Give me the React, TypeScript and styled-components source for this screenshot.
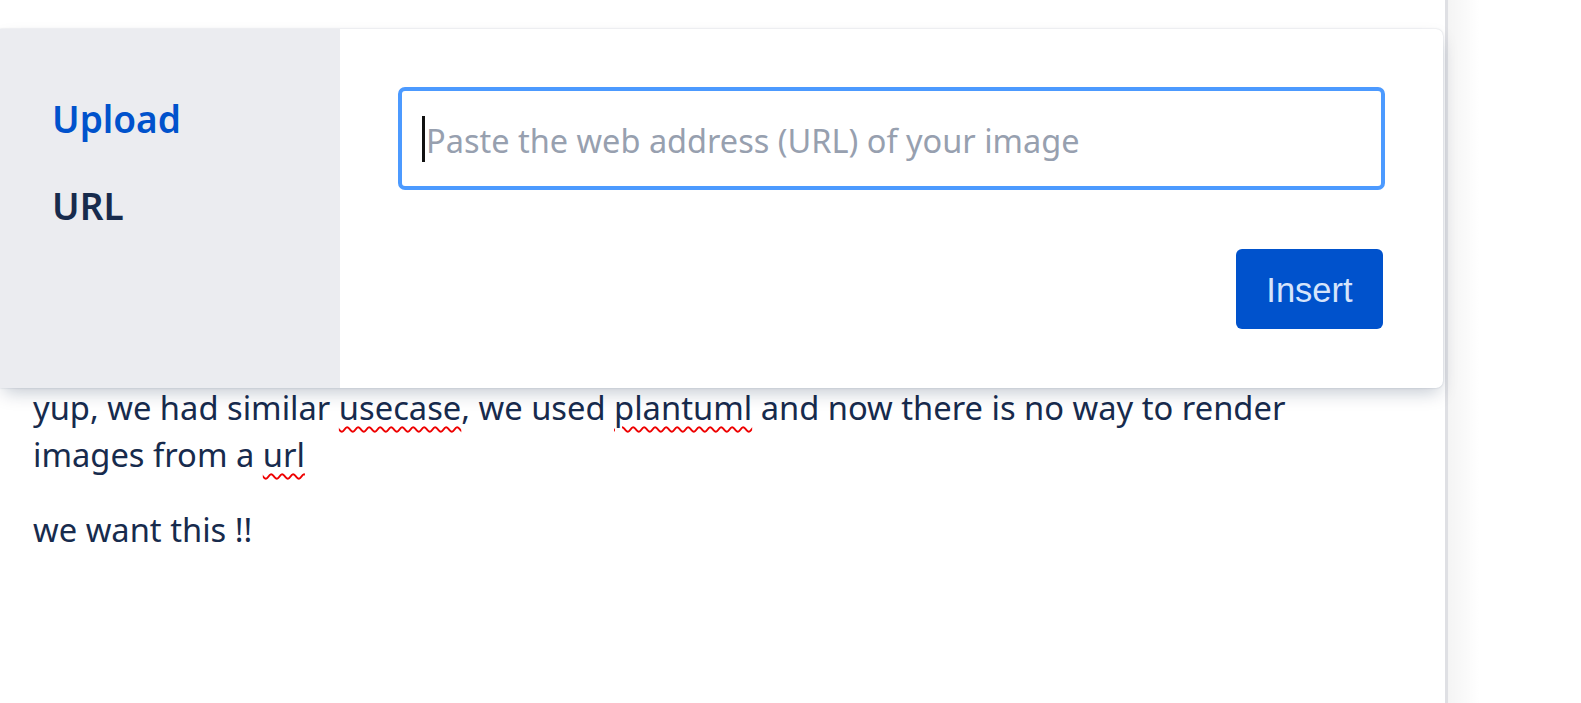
import React from "react";
import styled, { createGlobalStyle } from "styled-components";

const Global = createGlobalStyle`
  html, body { margin: 0; padding: 0; background: #fff; overflow: hidden; }
  body { font-family: "Noto Sans", "Open Sans", sans-serif; }
`;

const Page = styled.div`
  position: relative;
  width: 100vw;
  height: 100vh;
  overflow: hidden;
  display: flex;
  background: #fff;
`;

const Main = styled.div`
  flex: 0 0 1448px;
  height: 100%;
  box-sizing: border-box;
  border-right: 3px solid #dfe0e4;
  padding: 384px 0 0 33px;
  color: #172b4d;
  font-family: "Noto Sans", sans-serif;
  font-size: 32.7px;
  line-height: 47px;
`;

const Side = styled.div`
  flex: 1;
  background: linear-gradient(to right, rgba(0, 0, 0, 0.045), rgba(0, 0, 0, 0) 32px);
`;

const Para = styled.p`
  margin: 0 0 28px 0;
  max-width: 1310px;
`;

const Misspelt = styled.span`
  text-decoration: underline wavy #e00;
  text-decoration-thickness: 1.5px;
  text-underline-offset: 6px;
`;

const Dialog = styled.div`
  position: absolute;
  left: 0;
  top: 29px;
  width: 1443px;
  height: 359px;
  display: flex;
  background: #fff;
  border-radius: 0 7px 7px 0;
  box-shadow: 0 8px 18px -4px rgba(9, 30, 66, 0.25), 0 0 2px rgba(9, 30, 66, 0.2);
  overflow: hidden;
`;

const Tabs = styled.nav`
  width: 340px;
  flex: 0 0 340px;
  background: #ebecf0;
  display: flex;
  flex-direction: column;
  padding: 60px 0 0 52px;
  box-sizing: border-box;
  gap: 27px;
`;

const Tab = styled.div<{ $active?: boolean }>`
  font-family: "Noto Sans", sans-serif;
  font-weight: 600;
  font-size: 37px;
  line-height: 60px;
  color: ${(p) => (p.$active ? "#0052cc" : "#172b4d")};
`;

const Body = styled.div`
  flex: 1;
  display: flex;
  flex-direction: column;
  padding: 58px 58px 0 58px;
`;

const Field = styled.div`
  height: 103px;
  box-sizing: border-box;
  border: 4px solid #4c9aff;
  border-radius: 7px;
  display: flex;
  align-items: center;
  padding: 3px 0 0 20px;
`;

const Caret = styled.span`
  display: inline-block;
  width: 3px;
  height: 46px;
  background: #111;
  margin: -3px 1px 0 0;
`;

const Placeholder = styled.span`
  font-family: "Noto Sans", sans-serif;
  font-size: 32.5px;
  color: #97a0af;
`;

const Actions = styled.div`
  display: flex;
  justify-content: flex-end;
  margin-top: 59px;
  padding-right: 2px;
`;

const Button = styled.button`
  width: 147px;
  height: 80px;
  border: none;
  border-radius: 6px;
  background: #0052cc;
  color: #d6e4fb;
  font-family: "Liberation Sans", Arial, sans-serif;
  font-size: 34.5px;
  padding: 3px 0 0 0;
`;

export default function App() {
  return (
    <>
      <Global />
      <Page>
        <Main>
          <Para>
            yup, we had similar <Misspelt>usecase</Misspelt>, we used{" "}
            <Misspelt>plantuml</Misspelt> and now there is no way to render images from a{" "}
            <Misspelt>url</Misspelt>
          </Para>
          <Para>we want this !!</Para>
        </Main>
        <Side />
        <Dialog>
          <Tabs>
            <Tab $active>Upload</Tab>
            <Tab>URL</Tab>
          </Tabs>
          <Body>
            <Field>
              <Caret />
              <Placeholder>Paste the web address (URL) of your image</Placeholder>
            </Field>
            <Actions>
              <Button>Insert</Button>
            </Actions>
          </Body>
        </Dialog>
      </Page>
    </>
  );
}
